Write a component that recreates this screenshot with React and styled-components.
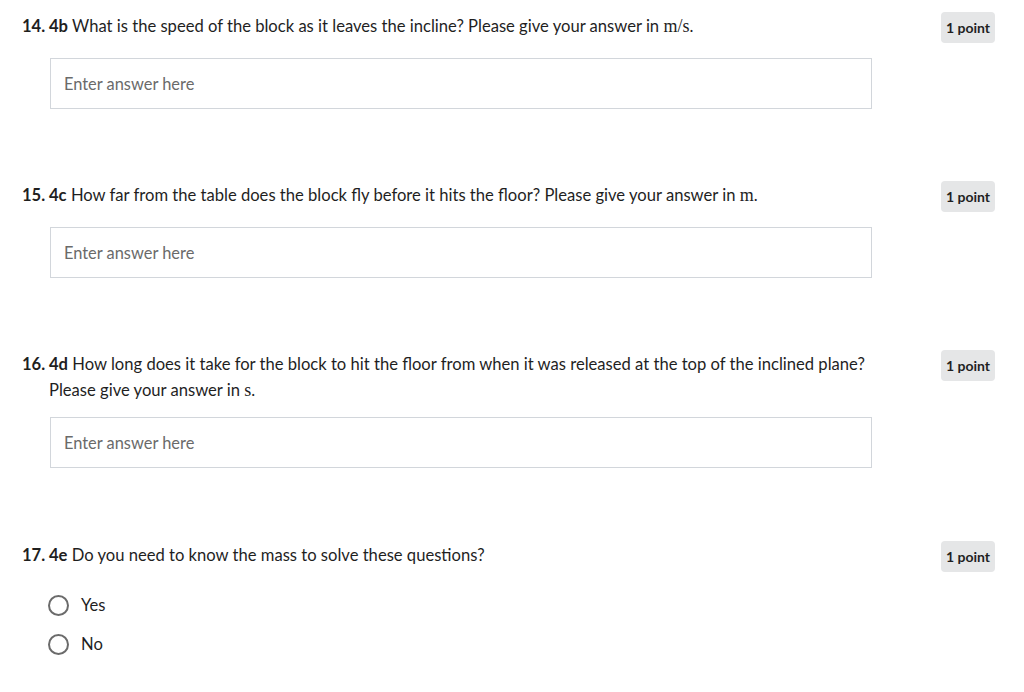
import React from 'react'
import styled, { createGlobalStyle } from 'styled-components'

const GlobalStyle = createGlobalStyle`
  body {
    margin: 0;
    background: #fff;
    font-family: Lato, "Noto Sans", sans-serif;
    color: #1f1f1f;
  }
`

const Page = styled.div`
  padding: 12px 29px 0 22px;
`

const Question = styled.div`
  margin-bottom: ${p => p.after}px;
`

const Header = styled.div`
  display: flex;
  justify-content: space-between;
  align-items: flex-start;
`

const Prompt = styled.div`
  display: grid;
  grid-template-columns: 27px 1fr;
  font-size: 16.6px;
  line-height: 26px;
  margin-top: 1px;
  max-width: 850px;
`

const Num = styled.span`
  font-weight: 700;
`

const Tag = styled.span`
  font-weight: 700;
`

const Math = styled.span`
  font-family: "Liberation Serif", "DejaVu Serif", serif;
  font-size: 18px;
  line-height: 1;
`

const Points = styled.div`
  flex: none;
  height: 31px;
  line-height: 31px;
  padding: 0 5px;
  border-radius: 4px;
  background: #e5e6e7;
  font-size: 14px;
  font-weight: 700;
  color: #1f1f1f;
`

const Body = styled.div`
  padding-left: 28px;
  margin-top: ${p => p.gap}px;
`

const Answer = styled.input`
  display: block;
  box-sizing: border-box;
  width: 822px;
  height: 51px;
  padding: 0 13px;
  border: 1px solid #d2d6db;
  border-radius: 0;
  font-family: Lato, "Noto Sans", sans-serif;
  font-size: 16.4px;
  color: #1f1f1f;
  outline: none;
  &::placeholder {
    color: #6a6a6a;
  }
`

const Options = styled.div`
  display: flex;
  flex-direction: column;
  gap: 13px;
  margin-left: -2px;
`

const Option = styled.label`
  display: flex;
  align-items: center;
  gap: 12px;
  height: 26px;
  font-size: 16.6px;
  cursor: pointer;
`

const Radio = styled.span`
  box-sizing: border-box;
  width: 21px;
  height: 21px;
  border-radius: 50%;
  border: 2px solid #6b6b6b;
`

function Item({ num, tag, children, gap = 15, after = 72, answer = true, options }) {
  return (
    <Question after={after}>
      <Header>
        <Prompt>
          <Num>{num}</Num>
          <div>
            <Tag>{tag}</Tag> {children}
          </div>
        </Prompt>
        <Points>1 point</Points>
      </Header>
      <Body gap={gap}>
        {answer && <Answer type="text" placeholder="Enter answer here" />}
        {options && (
          <Options>
            {options.map(o => (
              <Option key={o}>
                <Radio />
                {o}
              </Option>
            ))}
          </Options>
        )}
      </Body>
    </Question>
  )
}

export default function App() {
  return (
    <Page>
      <GlobalStyle />
      <Item num="14." tag="4b">
        What is the speed of the block as it leaves the incline? Please give your answer in <Math>m/s</Math>.
      </Item>
      <Item num="15." tag="4c">
        How far from the table does the block fly before it hits the floor? Please give your answer in <Math>m</Math>.
      </Item>
      <Item num="16." tag="4d" gap={14} after={73}>
        How long does it take for the block to hit the floor from when it was released at the top of the inclined plane? Please give your answer in <Math>s</Math>.
      </Item>
      <Item num="17." tag="4e" gap={20} after={0} answer={false} options={['Yes', 'No']}>
        Do you need to know the mass to solve these questions?
      </Item>
    </Page>
  )
}
